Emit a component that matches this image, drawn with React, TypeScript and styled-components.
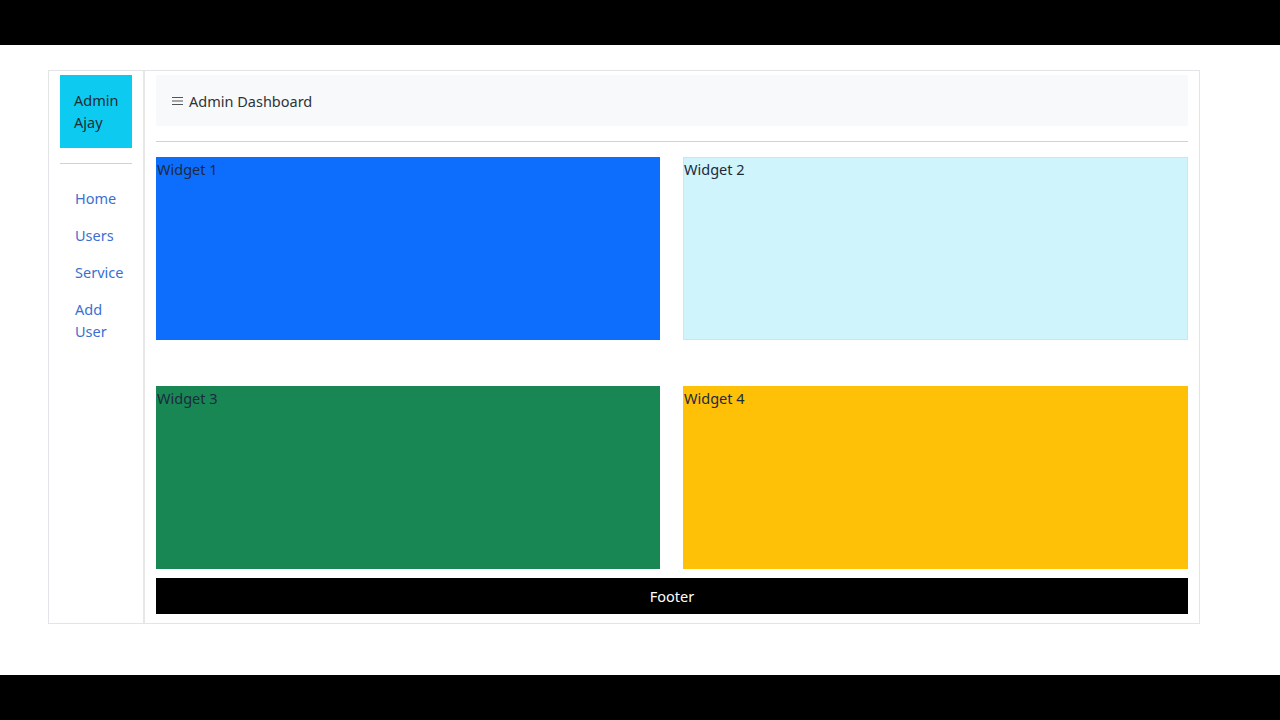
import { createGlobalStyle } from 'styled-components';
import styled from 'styled-components';

const GlobalStyle = createGlobalStyle`
  html, body { margin: 0; padding: 0; background: #000; }
  body { font-family: "Noto Sans", "Open Sans", sans-serif; font-size: 14.5px; line-height: 22px; color: #212529; }
  * { box-sizing: border-box; }
`;

const Screen = styled.div`
  width: 1280px;
  height: 720px;
  display: flex;
  flex-direction: column;
  justify-content: center;
`;

const Stage = styled.div`
  height: 630px;
  background: #fff;
  padding: 25px 0 0 48px;
`;

const Frame = styled.div`
  width: 1152px;
  height: 554px;
  border: 1px solid #e2e4e7;
  display: flex;
`;

const Sidebar = styled.aside`
  width: 96px;
  flex-shrink: 0;
  border-right: 2px solid #e6e6e6;
  padding: 4px 11px 0 11px;
`;

const Brand = styled.div`
  background: #0dcaf0;
  height: 73px;
  padding: 14px 14px;
  color: #1f2d33;
`;

const Rule = styled.hr`
  border: 0;
  border-top: 1px solid #cfd2d5;
  margin: 15px 0;
`;

const NavList = styled.nav`
  display: flex;
  flex-direction: column;
`;

const NavLink = styled.a`
  display: block;
  padding: 7.5px 15px;
  color: #3a6fd2;
  text-decoration: none;
`;

const Main = styled.main`
  flex: 1;
  padding: 4px 11px 0 11px;
  display: flex;
  flex-direction: column;
`;

const Header = styled.header`
  background: #f8f9fa;
  height: 51px;
  padding: 0 16px;
  display: flex;
  align-items: center;
  gap: 6px;
  color: #2f3336;
`;

const Grid = styled.div`
  display: grid;
  grid-template-columns: 504px 505px;
  column-gap: 23px;
  row-gap: 46px;
`;

const Widget = styled.div<{ bg: string; edge?: string }>`
  height: 183px;
  background: ${(p) => p.bg};
  border: 1px solid ${(p) => p.edge || p.bg};
  color: #1c2a40;
  line-height: 23px;
`;

const Footer = styled.footer`
  margin-top: 9px;
  height: 36px;
  background: #000;
  color: #fff;
  display: flex;
  align-items: center;
  justify-content: center;
`;

const MenuIcon = () => (
  <svg width="11" height="10" viewBox="0 0 11 10">
    <path d="M0 1.5h11M0 5h11M0 8.5h11" stroke="#555" strokeWidth="1.2" />
  </svg>
);

const widgets = [
  { name: 'Widget 1', bg: '#0d6efd' },
  { name: 'Widget 2', bg: '#cff4fc', edge: '#b8eefa' },
  { name: 'Widget 3', bg: '#198754' },
  { name: 'Widget 4', bg: '#ffc107' },
];

export default function App() {
  return (
    <>
      <GlobalStyle />
      <Screen>
        <Stage>
          <Frame>
            <Sidebar>
              <Brand>Admin Ajay</Brand>
              <Rule />
              <NavList>
                <NavLink href="#">Home</NavLink>
                <NavLink href="#">Users</NavLink>
                <NavLink href="#">Service</NavLink>
                <NavLink href="#">Add User</NavLink>
              </NavList>
            </Sidebar>
            <Main>
              <Header>
                <MenuIcon />
                <span>Admin Dashboard</span>
              </Header>
              <Rule />
              <Grid>
                {widgets.map((w) => (
                  <Widget key={w.name} bg={w.bg} edge={w.edge}>
                    {w.name}
                  </Widget>
                ))}
              </Grid>
              <Footer>Footer</Footer>
            </Main>
          </Frame>
        </Stage>
      </Screen>
    </>
  );
}
